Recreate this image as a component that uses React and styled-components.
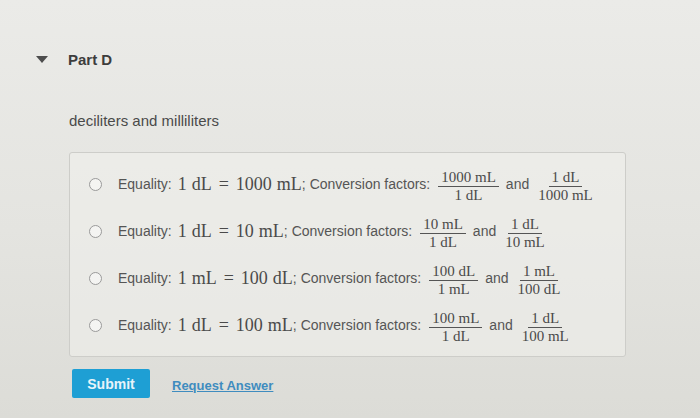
import React from 'react';
import styled, { createGlobalStyle } from 'styled-components';

const GlobalStyle = createGlobalStyle`
  html, body {
    margin: 0;
    padding: 0;
  }
  body {
    width: 700px;
    height: 418px;
    overflow: hidden;
    background: linear-gradient(180deg, #ebebe8 0%, #e4e4e0 55%, #dcdcd7 100%);
    font-family: "Liberation Sans", Arial, sans-serif;
    color: #4a4a4a;
  }
`;

const Page = styled.div`
  padding: 48px 0 0 36px;
`;

const PartHeader = styled.div`
  display: flex;
  align-items: center;
  gap: 20px;
  height: 22px;
`;

const Caret = styled.span`
  width: 0;
  height: 0;
  border-left: 6px solid transparent;
  border-right: 6px solid transparent;
  border-top: 7px solid #4d4d4d;
`;

const PartTitle = styled.h2`
  margin: 0;
  font-size: 15px;
  font-weight: bold;
  color: #3d3d3d;
`;

const Body = styled.div`
  padding-left: 33px;
`;

const Prompt = styled.p`
  margin: 41px 0 0;
  font-size: 15px;
  color: #4a4a4a;
  line-height: 20px;
`;

const OptionsBox = styled.div`
  margin-top: 21px;
  width: 557px;
  box-sizing: border-box;
  padding: 10px 0 10px 19px;
  border: 1px solid #cdcdc9;
  border-radius: 3px;
  background: rgba(240, 240, 237, 0.55);
  display: flex;
  flex-direction: column;
  gap: 5px;
`;

const Option = styled.label`
  display: flex;
  align-items: center;
  height: 42px;
  font-size: 14px;
  color: #555;
  white-space: pre;
`;

const Radio = styled.span`
  width: 11px;
  height: 11px;
  border: 1.5px solid #9a9a9a;
  border-radius: 50%;
  background: #f4f4f2;
  margin-right: 16px;
  flex-shrink: 0;
`;

const Math = styled.span`
  font-family: "Liberation Serif", "Times New Roman", serif;
  font-size: 18px;
  margin-left: 6px;
  word-spacing: 0.5px;
  color: #4a4a4a;
`;

const Equals = styled.span`
  margin: 0 7px;
`;

const Fraction = styled.span`
  display: inline-flex;
  flex-direction: column;
  align-items: center;
  font-family: "Liberation Serif", "Times New Roman", serif;
  font-size: 15px;
  line-height: 15px;
  margin: 4px ${p => p.$right || 6}px 0 ${p => p.$left || 6}px;
  color: #4a4a4a;
`;

const Num = styled.span`
  padding: 0 3px 1px;
  border-bottom: 1px solid #555;
`;

const Den = styled.span`
  padding: 1px 3px 0;
`;

const Actions = styled.div`
  display: flex;
  align-items: center;
  gap: 22px;
  margin-top: 12px;
  padding-left: 3px;
`;

const SubmitButton = styled.button`
  width: 78px;
  height: 29px;
  border: none;
  border-radius: 2px;
  background: #1e9fd4;
  color: #e8f4fa;
  font-family: "Liberation Sans", Arial, sans-serif;
  font-size: 14px;
  font-weight: bold;
`;

const RequestLink = styled.a`
  font-size: 13px;
  font-weight: bold;
  color: #3f8cbf;
  text-decoration: underline;
  margin-top: 4px;
`;

const options = [
  { a: '1 dL', b: '1000 mL', n1: '1000 mL', d1: '1 dL', n2: '1 dL', d2: '1000 mL' },
  { a: '1 dL', b: '10 mL', n1: '10 mL', d1: '1 dL', n2: '1 dL', d2: '10 mL' },
  { a: '1 mL', b: '100 dL', n1: '100 dL', d1: '1 mL', n2: '1 mL', d2: '100 dL' },
  { a: '1 dL', b: '100 mL', n1: '100 mL', d1: '1 dL', n2: '1 dL', d2: '100 mL' },
];

const App = () => (
  <>
    <GlobalStyle />
    <Page>
      <PartHeader>
        <Caret />
        <PartTitle>Part D</PartTitle>
      </PartHeader>
      <Body>
        <Prompt>deciliters and milliliters</Prompt>
        <OptionsBox>
          {options.map((o, i) => (
            <Option key={i}>
              <Radio />
              Equality:
              <Math>{o.a}<Equals>=</Equals>{o.b}</Math>
              ; Conversion factors:
              <Fraction $left={8} $right={7}>
                <Num>{o.n1}</Num>
                <Den>{o.d1}</Den>
              </Fraction>
              and
              <Fraction $left={6}>
                <Num>{o.n2}</Num>
                <Den>{o.d2}</Den>
              </Fraction>
            </Option>
          ))}
        </OptionsBox>
        <Actions>
          <SubmitButton>Submit</SubmitButton>
          <RequestLink>Request Answer</RequestLink>
        </Actions>
      </Body>
    </Page>
  </>
);

export default App;
